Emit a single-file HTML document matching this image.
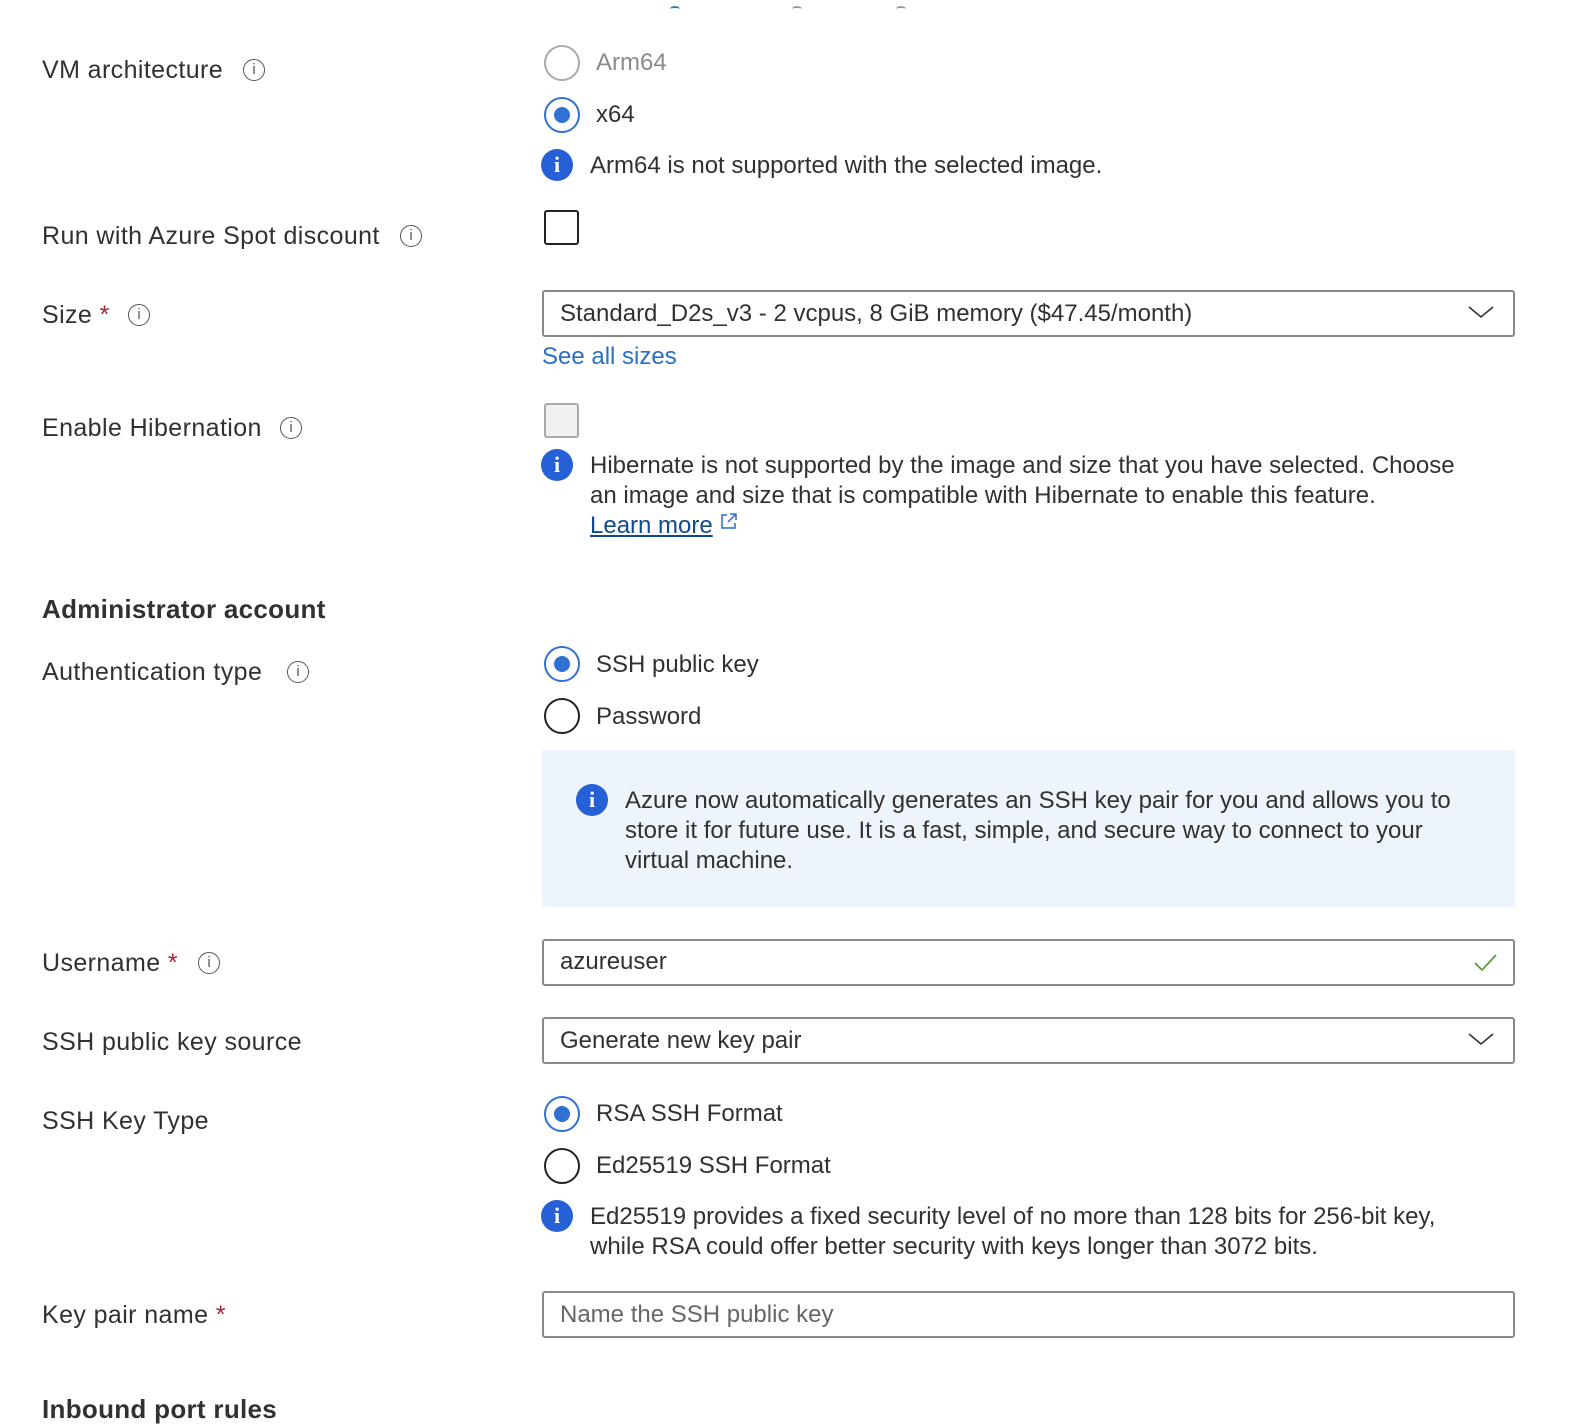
<!DOCTYPE html>
<html><head><meta charset="utf-8"><style>
body{margin:0;width:1586px;height:1428px;background:#fff;position:relative;overflow:hidden;font-family:"Liberation Sans",sans-serif;color:#323130;font-size:24px}
.a{position:absolute;white-space:nowrap;line-height:30px}
.l{font-size:25px;letter-spacing:0.4px}
.i{position:absolute;width:22px;height:22px;border:1.5px solid #555;border-radius:50%;box-sizing:border-box;font-size:15px;line-height:19px;text-align:center;color:#555;font-family:"Liberation Sans",sans-serif}
.r{position:absolute;width:36px;height:36px;border:2px solid #222;border-radius:50%;box-sizing:border-box}
.r.on{border-color:#2f72d3}
.r.on:after{content:"";position:absolute;left:8px;top:8px;width:16px;height:16px;border-radius:50%;background:#2f72d3}
.r.dis{border-color:#aaa}
.b{position:absolute;width:32px;height:32px;border-radius:50%;background:#2660d6;color:#fff;text-align:center;font:bold 22px/32px "Liberation Serif",serif}
.box{position:absolute;left:542px;width:973px;height:47px;border:2px solid #8a8a8a;border-radius:3px;box-sizing:border-box}
.chev{position:absolute;right:18px;top:10px}
.req{color:#a4262c}
h3{margin:0;position:absolute;font-size:26px;font-weight:bold;line-height:30px;white-space:nowrap;letter-spacing:0.3px}
</style></head><body>
<div style="position:absolute;left:670px;top:6px;width:10px;height:4px;border-top:2px solid #2f72d3;border-radius:50% 50% 0 0"></div>
<div style="position:absolute;left:792px;top:6px;width:10px;height:4px;border-top:2px solid #999;border-radius:50% 50% 0 0"></div>
<div style="position:absolute;left:896px;top:6px;width:10px;height:4px;border-top:2px solid #999;border-radius:50% 50% 0 0"></div>

<div class="a l" style="left:42px;top:55px">VM architecture</div><div class="i" style="left:243px;top:59px">i</div>
<div class="r dis" style="left:544px;top:45px"></div><div class="a" style="left:596px;top:48px;color:#8a8a8a">Arm64</div>
<div class="r on" style="left:544px;top:97px"></div><div class="a" style="left:596px;top:100px">x64</div>
<div class="b" style="left:541px;top:149px">i</div><div class="a" style="left:590px;top:151px">Arm64 is not supported with the selected image.</div>

<div class="a l" style="left:42px;top:221px">Run with Azure Spot discount</div><div class="i" style="left:400px;top:225px">i</div>
<div style="position:absolute;left:544px;top:210px;width:35px;height:35px;border:2px solid #222;border-radius:3px;box-sizing:border-box"></div>

<div class="a l" style="left:42px;top:300px">Size <span class="req">*</span></div><div class="i" style="left:128px;top:304px">i</div>
<div class="box" style="top:290px"><div class="a" style="left:16px;top:7px">Standard_D2s_v3 - 2 vcpus, 8 GiB memory ($47.45/month)</div>
<svg class="chev" width="28" height="20" viewBox="0 0 28 20"><path d="M2 5 L14 15 L26 5" fill="none" stroke="#333" stroke-width="1.6"/></svg></div>
<div class="a" style="left:542px;top:342px;color:#2a6fc4">See all sizes</div>

<div class="a l" style="left:42px;top:413px">Enable Hibernation</div><div class="i" style="left:280px;top:417px">i</div>
<div style="position:absolute;left:544px;top:403px;width:35px;height:35px;border:2px solid #aaa;background:#f1f1f1;border-radius:3px;box-sizing:border-box"></div>
<div class="b" style="left:541px;top:449px">i</div>
<div class="a" style="left:590px;top:451px">Hibernate is not supported by the image and size that you have selected. Choose</div>
<div class="a" style="left:590px;top:481px">an image and size that is compatible with Hibernate to enable this feature.</div>
<div class="a" style="left:590px;top:511px"><span style="color:#0e4a8f;text-decoration:underline">Learn more</span> <svg width="20" height="20" viewBox="0 0 20 20" style="vertical-align:2px"><path d="M8 4H3v13h13v-5M11 3h6v6M17 3L9 11" fill="none" stroke="#2a6fc4" stroke-width="1.5"/></svg></div>

<h3 style="left:42px;top:594px">Administrator account</h3>
<div class="a l" style="left:42px;top:657px">Authentication type</div><div class="i" style="left:287px;top:661px">i</div>
<div class="r on" style="left:544px;top:646px"></div><div class="a" style="left:596px;top:650px">SSH public key</div>
<div class="r" style="left:544px;top:698px"></div><div class="a" style="left:596px;top:702px">Password</div>
<div style="position:absolute;left:542px;top:750px;width:973px;height:157px;background:#eef4fc"></div>
<div class="b" style="left:576px;top:784px">i</div>
<div class="a" style="left:625px;top:786px">Azure now automatically generates an SSH key pair for you and allows you to</div>
<div class="a" style="left:625px;top:816px">store it for future use. It is a fast, simple, and secure way to connect to your</div>
<div class="a" style="left:625px;top:846px">virtual machine.</div>

<div class="a l" style="left:42px;top:948px">Username <span class="req">*</span></div><div class="i" style="left:198px;top:952px">i</div>
<div class="box" style="top:939px"><div class="a" style="left:16px;top:6px">azureuser</div>
<svg class="chev" width="28" height="22" viewBox="0 0 28 22" style="top:10px;right:14px"><path d="M4 12 L11 19 L25 4" fill="none" stroke="#5a9e3a" stroke-width="1.8"/></svg></div>

<div class="a l" style="left:42px;top:1027px">SSH public key source</div>
<div class="box" style="top:1017px"><div class="a" style="left:16px;top:7px">Generate new key pair</div>
<svg class="chev" width="28" height="20" viewBox="0 0 28 20"><path d="M2 5 L14 15 L26 5" fill="none" stroke="#333" stroke-width="1.6"/></svg></div>

<div class="a l" style="left:42px;top:1106px">SSH Key Type</div>
<div class="r on" style="left:544px;top:1096px"></div><div class="a" style="left:596px;top:1099px">RSA SSH Format</div>
<div class="r" style="left:544px;top:1148px"></div><div class="a" style="left:596px;top:1151px">Ed25519 SSH Format</div>
<div class="b" style="left:541px;top:1200px">i</div>
<div class="a" style="left:590px;top:1202px">Ed25519 provides a fixed security level of no more than 128 bits for 256-bit key,</div>
<div class="a" style="left:590px;top:1232px">while RSA could offer better security with keys longer than 3072 bits.</div>

<div class="a l" style="left:42px;top:1300px">Key pair name <span class="req">*</span></div>
<div class="box" style="top:1291px"><div class="a" style="left:16px;top:7px;color:#666">Name the SSH public key</div></div>

<h3 style="left:42px;top:1394px">Inbound port rules</h3>
</body></html>
